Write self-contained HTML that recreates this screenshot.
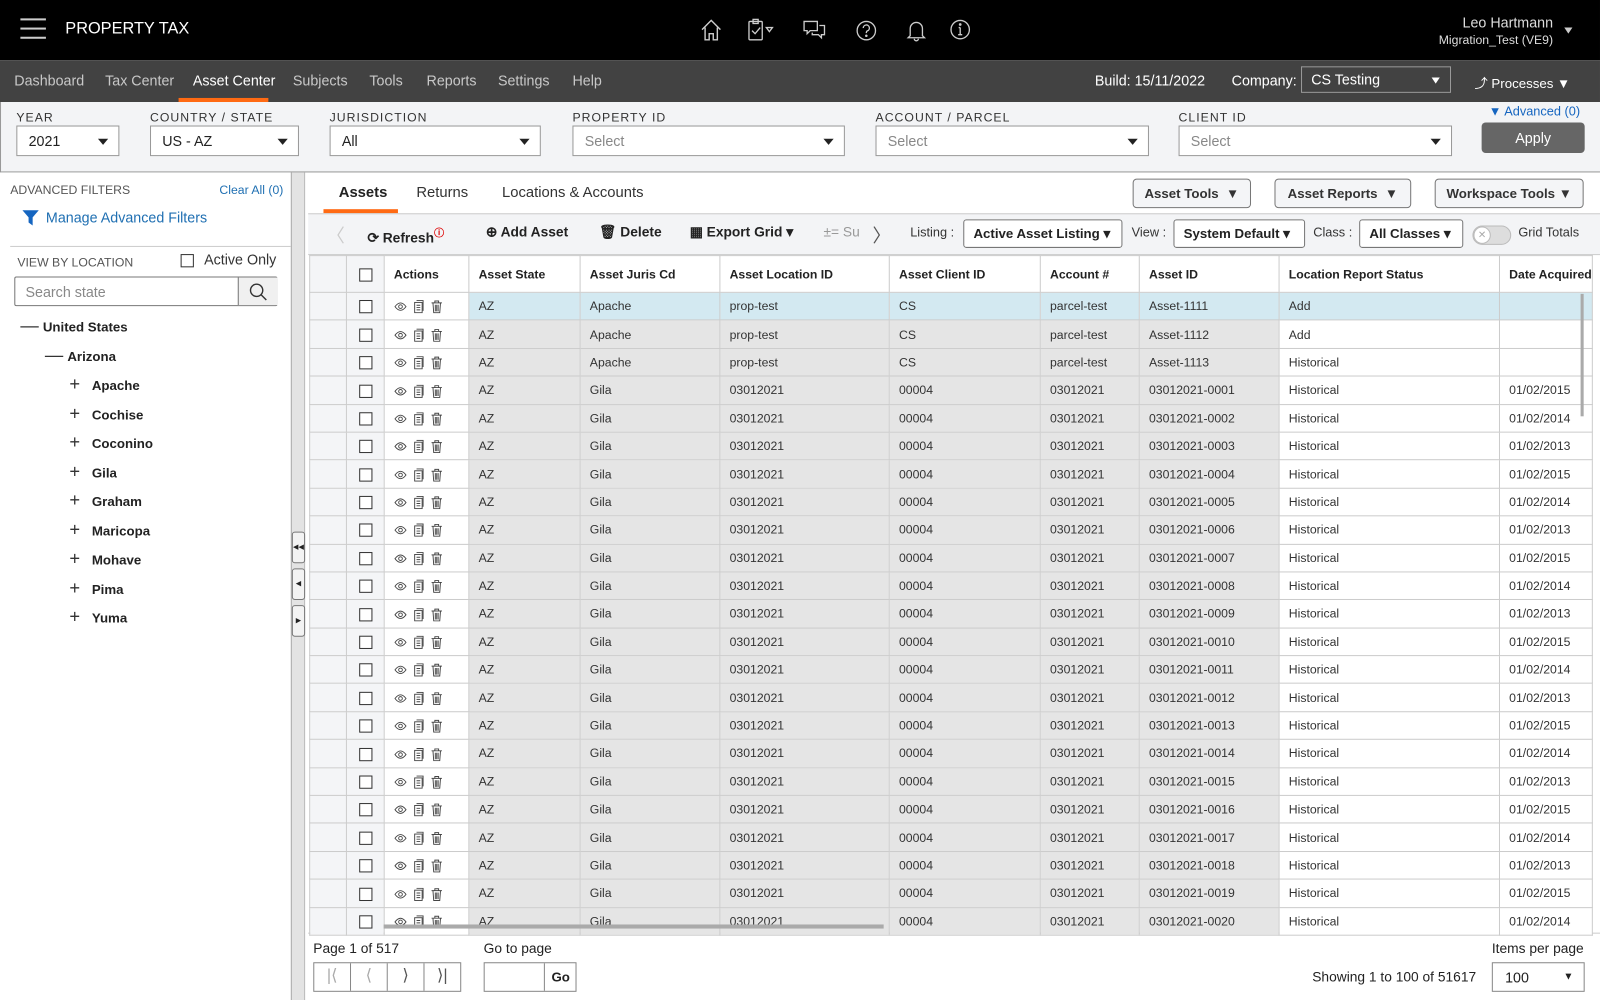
<!DOCTYPE html>
<html><head><meta charset="utf-8"><style>
*{box-sizing:border-box;margin:0;padding:0}
html,body{width:1600px;height:1000px;overflow:hidden;background:#fff}
body{font-family:"Liberation Sans",Arial,sans-serif;color:#222}
#wrap{position:absolute;left:0;top:0;width:1568px;height:980px;transform:scale(1.0204);transform-origin:0 0;overflow:hidden}
.n{font-family:"Liberation Sans Narrow","Liberation Sans",sans-serif}
.abs{position:absolute}
#top{left:0;top:0;width:1568px;height:59px;background:#000;color:#fff}
#nav{left:0;top:59px;width:1568px;height:41px;background:#424242;color:#c8c8c8;font-size:14px;white-space:nowrap}
#nav span{position:absolute;top:12px}
#filt{left:0;top:100px;width:1568px;height:69px;background:#f3f4f6;border-bottom:1px solid #999;border-left:1px solid #999}
.lbl{position:absolute;top:8px;font-size:12px;letter-spacing:1px;color:#333}
.sel{position:absolute;top:23px;height:30px;background:#fff;border:1px solid #999;font-size:14px;padding:6px 11px;color:#222}
.sel.ph{color:#888}
.sel:after{content:"";position:absolute;right:10px;top:12px;border-left:5px solid transparent;border-right:5px solid transparent;border-top:6px solid #222}
#left{left:0;top:169px;width:285px;height:811px;background:#fff}
#split{left:285px;top:169px;width:14px;height:811px;background:#e3e3e3;border-left:1px solid #aaa;border-right:1px solid #bbb}
.sbtn{position:absolute;left:0;width:13px;height:31px;background:#f3f3f3;border:1px solid #777;border-radius:3px;font-size:7px;text-align:center;line-height:29px;color:#222;overflow:hidden}
.tree{position:absolute;font-size:13px;font-weight:bold;color:#222}
.tree i{font-style:normal;font-weight:normal;font-size:18px;position:absolute;left:-22px;top:-4px;color:#333}
#main{left:299px;top:169px;width:1269px;height:811px}
.btn{position:absolute;height:29px;border:1px solid #777;border-radius:4px;background:#f4f5f7;font-size:13px;font-weight:bold;color:#333;padding:6px 10px;white-space:nowrap;text-align:center}
.tb{position:absolute;top:48px;font-size:13.5px;font-weight:bold;color:#222;white-space:nowrap}
.dd{position:absolute;top:43px;height:28px;border:1px solid #777;border-radius:3px;background:#fff;font-size:13px;font-weight:bold;padding:5px 9px;color:#222;white-space:nowrap}
.tl{position:absolute;top:49px;font-size:12.5px;color:#333;white-space:nowrap}
table{border-collapse:collapse;position:absolute;left:303px;top:250px;font-size:12px;table-layout:fixed}
td,th{border:1px solid #ccc;height:27.4px;padding:0 0 0 9px;white-space:nowrap;overflow:hidden;text-align:left}
th{height:36px;font-weight:bold;font-size:12px;background:#fff;color:#222}
td.c0{background:#f4f5f7}
td.c1{background:#f4f5f7;padding:0;text-align:center}
td.a{background:#fff;padding-left:9px}
td.g{background:#e5e5e5;color:#333}
td.w{background:#fff;color:#333}
tr.hl td.g,tr.hl td.w{background:#d3e9f1}
.cb{display:inline-block;width:13px;height:13px;border:1px solid #333;background:#fff;vertical-align:middle}
.ic{vertical-align:middle;margin-right:6px}
</style></head><body><div id="wrap">

<div id="top" class="abs">
 <div class="abs" style="left:20px;top:18px;width:25px;height:2px;background:#ccc;box-shadow:0 9px 0 #ccc,0 18px 0 #ccc"></div>
 <div class="abs n" style="left:64px;top:20px;font-size:16px;color:#fff">PROPERTY TAX</div>
 <svg class="abs" style="left:686px;top:18px" width="22" height="24" viewBox="0 0 22 24" fill="none" stroke="#ccc" stroke-width="1.4"><path d="M2 11 11 2 20 11M5 9v12h4v-6h4v6h4V9"/></svg>
 <svg class="abs" style="left:732px;top:18px" width="32" height="24" viewBox="0 0 32 24" fill="none" stroke="#ccc" stroke-width="1.3"><rect x="2" y="3" width="13" height="18" rx="1"/><rect x="6" y="1" width="5" height="4"/><path d="M5 12l3 3 5-6"/><path d="M19 9h6l-3 4z"/></svg>
 <svg class="abs" style="left:786px;top:18px" width="24" height="24" viewBox="0 0 24 24" fill="none" stroke="#ccc" stroke-width="1.3"><path d="M2 3h13v9H8l-3 3v-3H2z"/><path d="M17 7h5v9h-3v3l-3-3h-6v-2"/></svg>
 <svg class="abs" style="left:838px;top:19px" width="22" height="22" viewBox="0 0 22 22" fill="none" stroke="#ccc" stroke-width="1.3"><circle cx="11" cy="11" r="9"/><path d="M8 8.5a3 3 0 1 1 4 2.8c-1 .4-1 1-1 2.2"/><circle cx="11" cy="16" r=".6" fill="#ccc"/></svg>
 <svg class="abs" style="left:887px;top:18px" width="22" height="24" viewBox="0 0 22 24" fill="none" stroke="#ccc" stroke-width="1.3"><path d="M5 17V10a6 6 0 0 1 12 0v7l2 2H3z"/><path d="M9 20a2 2 0 0 0 4 0"/></svg>
 <svg class="abs" style="left:930px;top:18px" width="22" height="22" viewBox="0 0 22 22" fill="none" stroke="#ccc" stroke-width="1.3"><circle cx="11" cy="11" r="9"/><path d="M11 9v7M9 16h4M9.5 9H11"/><circle cx="11" cy="6" r=".7" fill="#ccc"/></svg>
 <div class="abs n" style="left:1380px;top:14px;width:142px;text-align:right;font-size:14px;color:#ddd">Leo Hartmann</div>
 <div class="abs n" style="left:1380px;top:32px;width:142px;text-align:right;font-size:12px;color:#ddd">Migration_Test (VE9)</div>
 <div class="abs" style="left:1533px;top:27px;border-left:4px solid transparent;border-right:4px solid transparent;border-top:6px solid #ccc"></div>
</div>

<div id="nav" class="abs n">
 <span style="left:14px">Dashboard</span><span style="left:103px">Tax Center</span><span style="left:189px;color:#fff">Asset Center</span><span style="left:287px">Subjects</span><span style="left:362px">Tools</span><span style="left:418px">Reports</span><span style="left:488px">Settings</span><span style="left:561px">Help</span>
 <div class="abs" style="left:175px;top:37px;width:88px;height:4px;background:#ff6a13"></div>
 <span style="left:1073px;color:#fff">Build: 15/11/2022</span>
 <span style="left:1207px;color:#fff">Company:</span>
 <div class="abs" style="left:1275px;top:6px;width:147px;height:26px;border:1px solid #999;color:#fff;font-size:14px;padding:4px 9px">CS Testing<div class="abs" style="right:10px;top:10px;border-left:4px solid transparent;border-right:4px solid transparent;border-top:6px solid #fff"></div></div>
 <span style="left:1445px;color:#fff;font-size:13px">⤴ Processes ▼</span>
</div>

<div id="filt" class="abs n">
 <div class="lbl" style="left:15px">YEAR</div><div class="sel" style="left:15px;width:101px">2021</div>
 <div class="lbl" style="left:146px">COUNTRY / STATE</div><div class="sel" style="left:146px;width:146px">US - AZ</div>
 <div class="lbl" style="left:322px">JURISDICTION</div><div class="sel" style="left:322px;width:207px">All</div>
 <div class="lbl" style="left:560px">PROPERTY ID</div><div class="sel ph" style="left:560px;width:267px">Select</div>
 <div class="lbl" style="left:857px">ACCOUNT / PARCEL</div><div class="sel ph" style="left:857px;width:268px">Select</div>
 <div class="lbl" style="left:1154px">CLIENT ID</div><div class="sel ph" style="left:1154px;width:268px">Select</div>
 <div class="abs" style="left:1458px;top:2px;font-size:12.5px;color:#1565c0">▼ Advanced (0)</div>
 <div class="abs" style="left:1451px;top:20px;width:101px;height:30px;background:#666;border-radius:4px;color:#fff;font-size:14px;text-align:center;line-height:30px">Apply</div>
</div>

<div id="left" class="abs">
 <div class="abs" style="left:10px;top:10px;font-size:12px;color:#555">ADVANCED FILTERS</div>
 <div class="abs" style="left:215px;top:10px;font-size:12px;color:#1f6fb2">Clear All (0)</div>
 <svg class="abs" style="left:22px;top:36px" width="16" height="16" viewBox="0 0 16 16"><path d="M0 1h16L10 8v8l-4-3V8z" fill="#1565c0"/></svg>
 <div class="abs" style="left:45px;top:36px;font-size:14px;color:#1f6fb2">Manage Advanced Filters</div>
 <div class="abs" style="left:10px;top:72px;width:275px;height:1px;background:#ccc"></div>
 <div class="abs" style="left:17px;top:81px;font-size:12px;color:#555">VIEW BY LOCATION</div>
 <div class="abs cb" style="left:177px;top:80px"></div>
 <div class="abs" style="left:200px;top:77px;font-size:14px;color:#333">Active Only</div>
 <div class="abs" style="left:14px;top:102px;width:258px;height:29px;border:1px solid #777;border-radius:2px;background:#fff"><div class="abs" style="left:10px;top:6px;font-size:14px;color:#888">Search state</div><div class="abs" style="left:218px;top:0;width:39px;height:27px;background:#f0f0f0;border-left:1px solid #777"><svg style="margin:5px 10px" width="18" height="18" viewBox="0 0 18 18" fill="none" stroke="#333" stroke-width="1.4"><circle cx="7.5" cy="7.5" r="6"/><path d="M12 12l5 5"/></svg></div></div>
 <div class="tree" style="left:42px;top:144px"><i>—</i>United States</div>
 <div class="tree" style="left:66px;top:173px"><i>—</i>Arizona</div>
 <div class="tree" style="left:90px;top:201px"><i>+</i>Apache</div>
 <div class="tree" style="left:90px;top:230px"><i>+</i>Cochise</div>
 <div class="tree" style="left:90px;top:258px"><i>+</i>Coconino</div>
 <div class="tree" style="left:90px;top:287px"><i>+</i>Gila</div>
 <div class="tree" style="left:90px;top:315px"><i>+</i>Graham</div>
 <div class="tree" style="left:90px;top:344px"><i>+</i>Maricopa</div>
 <div class="tree" style="left:90px;top:372px"><i>+</i>Mohave</div>
 <div class="tree" style="left:90px;top:401px"><i>+</i>Pima</div>
 <div class="tree" style="left:90px;top:429px"><i>+</i>Yuma</div>
</div>
<div id="split" class="abs">
 <div class="sbtn" style="top:352px">◀◀</div><div class="sbtn" style="top:388px">◀</div><div class="sbtn" style="top:424px">▶</div>
</div>

<div id="main" class="abs">
 <div class="abs" style="left:33px;top:12px;font-size:14.5px;font-weight:bold;color:#222">Assets</div>
 <div class="abs" style="left:18px;top:36px;width:73px;height:4px;background:#ff6a13"></div>
 <div class="abs" style="left:109px;top:12px;font-size:14.5px;color:#333">Returns</div>
 <div class="abs" style="left:193px;top:12px;font-size:14.5px;color:#333">Locations &amp; Accounts</div>
 <div class="btn n" style="left:811px;top:6px;width:116px">Asset Tools &nbsp;▼</div>
 <div class="btn n" style="left:950px;top:6px;width:134px">Asset Reports &nbsp;▼</div>
 <div class="btn n" style="left:1107px;top:6px;width:146px">Workspace Tools ▼</div>
 <div class="abs" style="left:3px;top:40px;width:1266px;height:41px;background:#f3f4f6;border-top:1px solid #ccc;border-bottom:1px solid #ccc"></div>
 <div class="tb" style="left:21px;color:#ccc;font-weight:normal;font-size:18px;top:48px">〈</div>
 <div class="tb" style="left:61px;top:51px">⟳ Refresh<sup style="color:#d00;font-size:10px">ⓘ</sup></div>
 <div class="tb" style="left:177px;top:51px">⊕ Add Asset</div>
 <div class="tb" style="left:288px;top:51px">🗑 Delete</div>
 <div class="tb" style="left:377px;top:51px">▦ Export Grid ▾</div>
 <div class="tb" style="left:508px;top:51px;color:#999;font-weight:normal">±= Su</div>
 <div class="tb" style="left:556px;font-weight:normal;font-size:18px;top:48px;color:#555">〉</div>
 <div class="tl n" style="left:593px;top:52px">Listing :</div>
 <div class="dd n" style="left:645px;top:46px;width:156px">Active Asset Listing ▾</div>
 <div class="tl n" style="left:810px;top:52px">View :</div>
 <div class="dd n" style="left:851px;top:46px;width:129px">System Default ▾</div>
 <div class="tl n" style="left:988px;top:52px">Class :</div>
 <div class="dd n" style="left:1033px;top:46px;width:102px">All Classes ▾</div>
 <div class="abs" style="left:1144px;top:52px;width:38px;height:19px;border-radius:10px;background:#ddd;border:1px solid #bbb"><div style="width:17px;height:17px;border-radius:50%;background:#fff;border:1px solid #bbb;font-size:10px;color:#aaa;text-align:center;line-height:15px">✕</div></div>
 <div class="tl n" style="left:1189px;top:52px">Grid Totals</div>
 <div class="abs" style="left:3px;top:745px;width:1266px;height:70px;background:#fff;border-top:1px solid #ccc"></div>
 <div class="abs" style="left:8px;top:753px;font-size:13.5px">Page 1 of 517</div>
 <div class="abs" style="left:175px;top:753px;font-size:13.5px">Go to page</div>
 <div class="abs" style="left:8px;top:774px;width:145px;height:29px;border:1px solid #888;display:flex;font-size:16px;color:#555">
  <div style="flex:1;border-right:1px solid #888;text-align:center;line-height:26px;color:#aaa">|⟨</div><div style="flex:1;border-right:1px solid #888;text-align:center;line-height:26px;color:#aaa">⟨</div><div style="flex:1;border-right:1px solid #888;text-align:center;line-height:26px">⟩</div><div style="flex:1;text-align:center;line-height:26px">⟩|</div></div>
 <div class="abs" style="left:175px;top:774px;width:91px;height:29px;border:1px solid #888"><div class="abs" style="left:58px;top:0;width:32px;height:27px;border-left:1px solid #888;font-size:13px;text-align:center;line-height:27px;font-weight:bold">Go</div></div>
 <div class="abs" style="left:987px;top:781px;font-size:13.5px">Showing 1 to 100 of 51617</div>
 <div class="abs" style="left:1163px;top:753px;font-size:13.5px">Items per page</div>
 <div class="abs" style="left:1163px;top:774px;width:91px;height:29px;border:1px solid #888;font-size:14px;padding:6px 12px">100<span style="position:absolute;right:10px;font-size:10px;top:8px">▼</span></div>
</div>

<table>
<colgroup><col style="width:36px"><col style="width:37px"><col style="width:83px"><col style="width:109px"><col style="width:137px"><col style="width:166px"><col style="width:148px"><col style="width:97px"><col style="width:137px"><col style="width:216px"><col style="width:91px"></colgroup>
<tr><th style="background:#f4f5f7"></th><th style="background:#f4f5f7;padding:0;text-align:center"><span class="cb"></span></th><th>Actions</th><th>Asset State</th><th>Asset Juris Cd</th><th>Asset Location ID</th><th>Asset Client ID</th><th>Account #</th><th>Asset ID</th><th>Location Report Status</th><th>Date Acquired</th></tr>
<tbody id="tb"></tbody>
</table>
<div class="abs" style="left:1549px;top:288px;width:3px;height:120px;background:#aaa"></div>
<div class="abs" style="left:376px;top:906px;width:490px;height:4px;background:#aaa"></div>
</div>
<script>
var A='<svg class="ic" width="13" height="9" viewBox="0 0 14 10" fill="none" stroke="#444" stroke-width="1"><path d="M1 5q6-8 12 0q-6 8-12 0z"/><circle cx="7" cy="5" r="2"/></svg><svg class="ic" width="11" height="13" viewBox="0 0 12 14" fill="none" stroke="#444" stroke-width="1"><rect x="1.5" y="2.5" width="8" height="11"/><path d="M3.5 0.5h7v11M3.5 5.5h4M3.5 8h4M3.5 10.5h4"/></svg><svg class="ic" width="12" height="13" viewBox="0 0 13 14" fill="none" stroke="#444" stroke-width="1"><path d="M1 3h11M4.5 3V1h4v2M2.5 3l.8 10.5h6.4L10.5 3M5 5v7M6.5 5v7M8 5v7"/></svg>';
var rows=[["AZ","Apache","prop-test","CS","parcel-test","Asset-1111","Add",""],["AZ","Apache","prop-test","CS","parcel-test","Asset-1112","Add",""],["AZ","Apache","prop-test","CS","parcel-test","Asset-1113","Historical",""]];
var d=["01/02/2015","01/02/2014","01/02/2013"];
for(var i=1;i<=20;i++){var s=("000"+i).slice(-4);rows.push(["AZ","Gila","03012021","00004","03012021","03012021-"+s,"Historical",d[(i-1)%3]]);}
var h='';rows.forEach(function(r,k){h+='<tr'+(k==0?' class="hl"':'')+'><td class="c0"></td><td class="c1"><span class="cb"></span></td><td class="a">'+A+'</td>';
for(var j=0;j<8;j++){h+='<td class="'+(j<6?'g':'w')+'">'+r[j]+'</td>';}h+='</tr>';});
document.getElementById('tb').innerHTML=h;
</script>
</body></html>
